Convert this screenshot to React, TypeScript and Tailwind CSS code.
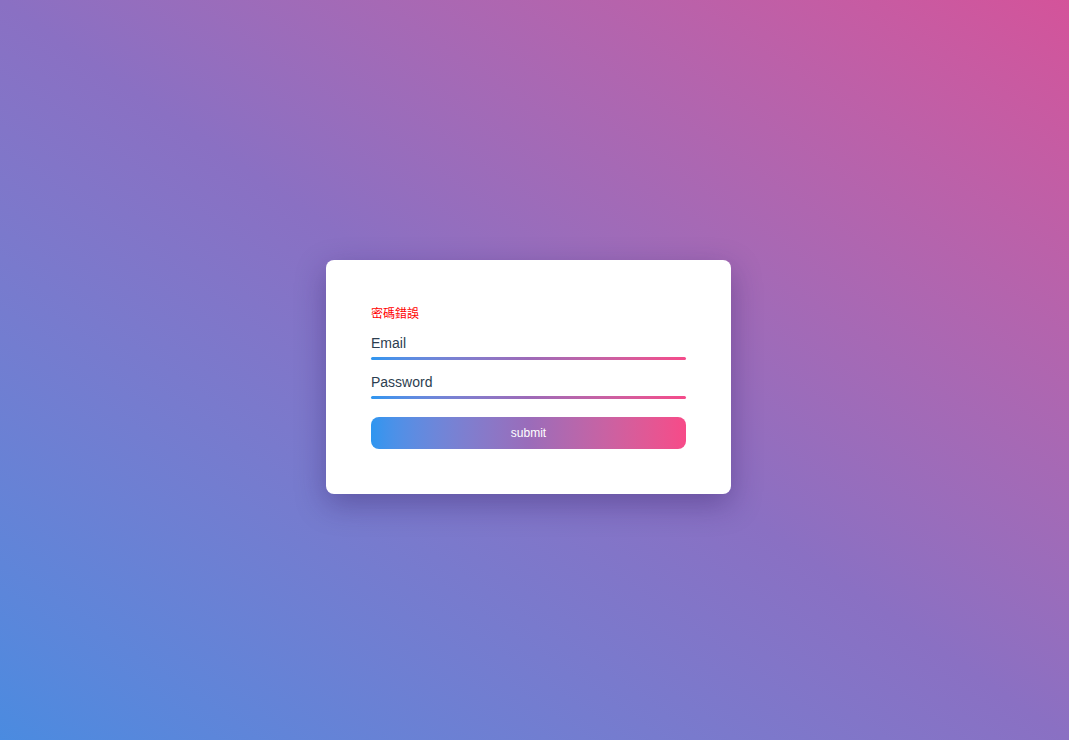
import React from "react";

export default function App() {
  return (
    <div
      className="flex min-h-screen w-full items-center justify-center bg-gradient-to-tr from-[#4a8be0] via-[#8a70c3] to-[#d4539a] pr-[12px] pt-[13px]"
      style={{ fontFamily: '"Liberation Sans", Arial, "Noto Sans CJK TC", sans-serif' }}
    >
      {/* Login card */}
      <div className="w-[405px] rounded-lg bg-white p-[45px] shadow-[0_10px_30px_rgba(40,20,90,0.35)]">
        <p className="mt-[1px] text-[12px] leading-4 text-[#ff0000]">密碼錯誤</p>

        <div className="mt-[11px]">
          <input
            type="email"
            placeholder="Email"
            className="block h-5 w-full bg-transparent text-[14px] leading-5 text-[#2c3e50] outline-none placeholder:text-[#2c3e50]"
          />
          <div className="mt-[4px] h-[3px] rounded-full bg-gradient-to-r from-[#2d96f0] via-[#9d6ab8] to-[#f54a8a]" />
        </div>

        <div className="mt-[12px]">
          <input
            type="password"
            placeholder="Password"
            className="block h-5 w-full bg-transparent text-[14px] leading-5 text-[#2c3e50] outline-none placeholder:text-[#2c3e50]"
          />
          <div className="mt-[4px] h-[3px] rounded-full bg-gradient-to-r from-[#2d96f0] via-[#9d6ab8] to-[#f54a8a]" />
        </div>

        <button className="mt-[18px] flex h-8 w-full items-center justify-center rounded-lg bg-gradient-to-r from-[#2d96f0] via-[#9a6cba] to-[#f74a88] text-[12px] font-normal text-white">
          submit
        </button>
      </div>
    </div>
  );
}
